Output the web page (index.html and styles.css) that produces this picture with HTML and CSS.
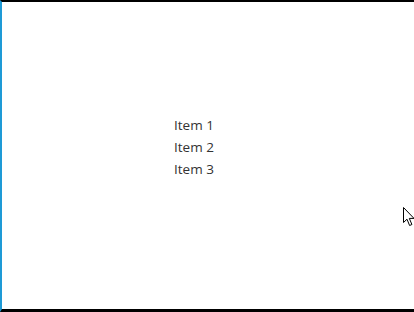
FILE: index.html
```html
<!DOCTYPE html>
<html lang="en">
<head>
    <meta charset="UTF-8">
    <meta name="viewport" content="width=device-width, initial-scale=1.0">
    <title>Items</title>
    <link rel="stylesheet" href="styles.css">
</head>
<body>
    <div class="window">
        <ul class="item-list">
            <li>Item 1</li>
            <li>Item 2</li>
            <li>Item 3</li>
        </ul>

        <!-- mouse pointer captured in the shot -->
        <svg class="cursor" width="12" height="20" viewBox="0 0 12 20">
            <path d="M0.5 0.5 L0.5 15.5 L4 12.2 L6.6 18.5 L8.9 17.5 L6.3 11.4 L11 11.4 Z" fill="#fff" stroke="#000" stroke-width="1" stroke-linejoin="miter"/>
        </svg>
    </div>
</body>
</html>
```

FILE: styles.css
```css
html, body {
    margin: 0;
    padding: 0;
    background-color: white;
}

.window {
    position: relative;
    box-sizing: border-box;
    width: 414px;
    height: 312px;
    border-top: 2px solid #000;
    border-bottom: 3px solid #000;
    border-left: 2px solid #1e9ad6;
    overflow: hidden;
    font-family: "Open Sans", "Noto Sans", Arial, sans-serif;
}

.item-list {
    list-style: none;
    margin: 0;
    padding: 112px 0 0 172px;
}

.item-list li {
    font-size: 13.5px;
    line-height: 22px;
    color: #333;
}

.cursor {
    position: absolute;
    left: 401px;
    top: 205px;
}
```
